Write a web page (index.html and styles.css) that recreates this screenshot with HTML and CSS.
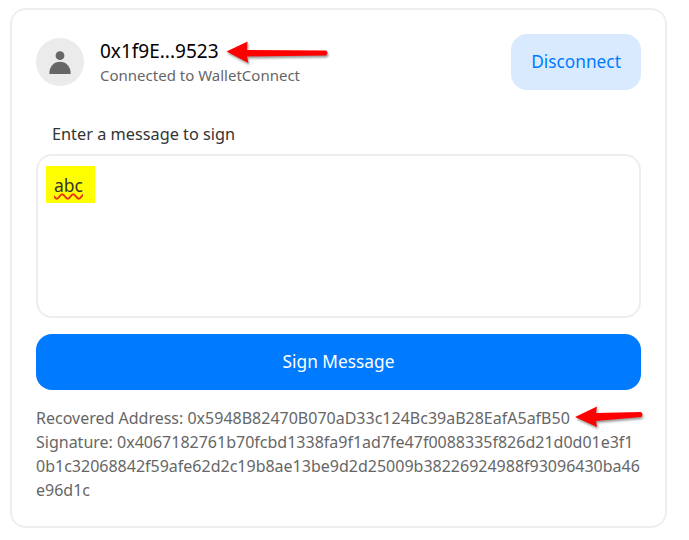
FILE: index.html
```html
<!DOCTYPE html>
<html lang="en">
<head>
<meta charset="utf-8">
<title>Sign Message</title>
<link rel="stylesheet" href="styles.css">
</head>
<body>
<main class="card">
  <header class="header">
    <div class="account">
      <div class="avatar">
        <svg viewBox="0 0 48 48" width="48" height="48"><circle cx="24" cy="17.7" r="4.4" fill="#666"/><path d="M13.300 36C13.300 28 18 23.700 24 23.700S34.700 28 34.700 36Z" fill="#666"/></svg>
      </div>
      <div class="account-text">
        <div class="address">0x1f9E...9523</div>
        <div class="connected">Connected to WalletConnect</div>
      </div>
    </div>
    <button class="disconnect">Disconnect</button>
  </header>
  <label class="label">Enter a message to sign</label>
  <div class="message"><div class="highlight"><span class="typed">abc</span></div></div>
  <button class="sign">Sign Message</button>
  <div class="result">
    <div>Recovered Address: 0x5948B82470B070aD33c124Bc39aB28EafA5afB50</div>
    <div class="signature">Signature: 0x4067182761b70fcbd1338fa9f1ad7fe47f0088335f826d21d0d01e3f10b1c32068842f59afe62d2c19b8ae13be9d2d25009b38226924988f93096430ba46e96d1c</div>
  </div>
</main>
<svg class="arrow arrow-top" viewBox="220 36 115 34" width="115" height="34"><path class="head" d="M226.500 51.500L247.500 41.500L247 50L326 50.500Q329 53 326 55.500L247 56.500L248.500 63Z"/></svg>
<svg class="arrow arrow-bottom" viewBox="570 400 80 34" width="80" height="34"><path class="head" d="M575 417L597 406.500L596 413L641 412Q644 414.500 641 417L596 421L597 427Z"/></svg>
</body>
</html>
```

FILE: styles.css
```css
* { box-sizing: border-box; }
html, body { margin: 0; padding: 0; background: #fff; }
body {
  width: 689px;
  height: 540px;
  padding: 8px 22px 0 10px;
  font-family: "Noto Sans", sans-serif;
  position: relative;
  overflow: hidden;
}
.card {
  width: 657px;
  height: 520px;
  border: 2px solid #eee;
  border-radius: 16px;
  padding: 24px;
  display: flex;
  flex-direction: column;
}
.header {
  display: flex;
  justify-content: space-between;
  align-items: center;
  height: 56px;
}
.account { display: flex; align-items: center; gap: 16px; }
.avatar {
  width: 48px;
  height: 48px;
  border-radius: 50%;
  background: #ebebeb;
}
.avatar svg { display: block; }
.account-text { display: flex; flex-direction: column; }
.address { font-size: 19px; line-height: 26px; color: #000; }
.connected { font-size: 15px; line-height: 22px; color: #666; }
.disconnect {
  width: 130px;
  height: 56px;
  border: 0;
  border-radius: 16px;
  background: #d9eaff;
  color: #007aff;
  font: 400 17.300px/24px "Noto Sans", sans-serif;
}
.label {
  margin: 32px 0 0 16px;
  font-size: 16.300px;
  font-weight: 400;
  line-height: 24px;
  color: #333;
  height: 32px;
}
.message {
  width: 605px;
  height: 164px;
  border: 2px solid #eee;
  border-radius: 16px;
  padding: 10px 8px;
}
.highlight {
  width: 49px;
  height: 37px;
  background: #ffff00;
  padding: 6px 8px;
  font-size: 17.500px;
  line-height: 26px;
  color: #333;
}
.typed { text-decoration: underline wavy #e8301c 1.500px; text-underline-offset: 1px; }
.sign {
  width: 605px;
  height: 56px;
  margin-top: 16px;
  border: 0;
  border-radius: 16px;
  background: #007aff;
  color: #fff;
  font: 400 17.300px/24px "Noto Sans", sans-serif;
}
.result {
  margin-top: 16px;
  font-size: 16px;
  line-height: 24px;
  color: #666;
}
.signature { word-break: break-all; }
.arrow { position: absolute; filter: drop-shadow(1px 2px 1px rgba(0,0,0,.4)); }
.arrow-top { left: 220px; top: 36px; }
.arrow-bottom { left: 570px; top: 400px; }
.arrow .head { fill: #f00; }
```
